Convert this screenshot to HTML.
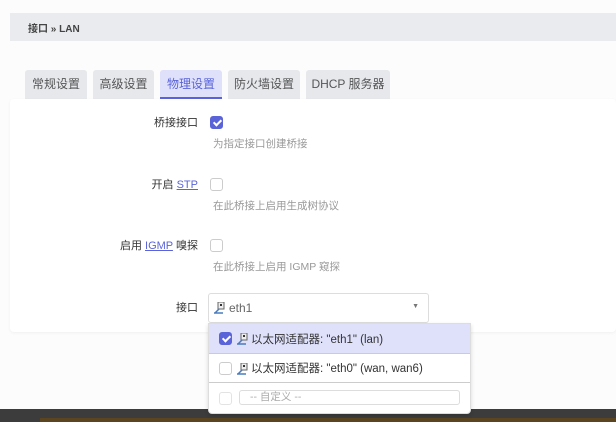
<!DOCTYPE html>
<html><head><meta charset="utf-8"><style>
*{box-sizing:border-box;margin:0;padding:0}
body{width:616px;height:422px;overflow:hidden;background:#fcfcfc;font-family:"Liberation Sans","Noto Sans CJK SC",sans-serif;font-size:11px;color:#333;position:relative}
.bc{position:absolute;left:10px;top:13px;width:606px;height:28px;background:#e9ebee;font-size:10px;font-weight:bold;color:#444;padding:7px 0 0 18px}
.tab{position:absolute;top:70px;height:29px;background:#e6e8ec;border-radius:3px 3px 0 0;font-size:12px;color:#555;text-align:center;line-height:28px}
.tab.a{background:#dfe1fb;color:#5a64d8;border-bottom:2px solid #5b63d9}
.card{position:absolute;left:10px;top:99px;width:606px;height:233px;background:#fff;border-radius:4px;box-shadow:0 1px 3px rgba(0,0,0,.05)}
.lbl{position:absolute;right:418px;font-size:11px;color:#333;text-align:right}
.lbl a{color:#5a64d8;text-decoration:underline}
.desc{position:absolute;left:213px;font-size:10.5px;color:#999}
.cb{position:absolute;width:13px;height:13px;border:1px solid #ccc;border-radius:3px;background:#fff}
.cb.on{background:#5b63d9;border-color:#5b63d9}
.cb.on:after{content:"";position:absolute;left:3.5px;top:1px;width:3px;height:6px;border:solid #fff;border-width:0 2px 2px 0;transform:rotate(45deg)}
.sel{position:absolute;left:208px;top:293px;width:221px;height:30px;border:1px solid #ddd;border-radius:3px;background:#fff;font-size:12px;color:#666;padding:7px 0 0 20px}
.ic{position:absolute;width:11px;height:12px}
.dd{position:absolute;left:208px;top:323px;width:263px;height:91px;background:#fff;border:1px solid #ddd;border-radius:0 0 4px 4px;box-shadow:0 2px 4px rgba(0,0,0,.15);z-index:3}
.row{position:absolute;left:0;width:261px;font-size:11.5px;color:#333}
.bot{position:absolute;left:0;top:409px;width:616px;height:13px;background:#3c3c3c}
.bot2{position:absolute;left:40px;top:418px;width:576px;height:4px;background:#5a4520}
</style></head><body>
<div class="bc">接口 » LAN</div>
<div class="tab" style="left:25px;width:62px">常规设置</div>
<div class="tab" style="left:93px;width:61px">高级设置</div>
<div class="tab a" style="left:160px;width:62px">物理设置</div>
<div class="tab" style="left:228px;width:72px">防火墙设置</div>
<div class="tab" style="left:306px;width:84px">DHCP 服务器</div>
<div class="card"></div>
<div class="lbl" style="top:114px">桥接接口</div>
<div class="cb on" style="left:210px;top:116px"></div>
<div class="desc" style="top:136px">为指定接口创建桥接</div>
<div class="lbl" style="top:176px">开启 <a>STP</a></div>
<div class="cb" style="left:210px;top:178px"></div>
<div class="desc" style="top:198px">在此桥接上启用生成树协议</div>
<div class="lbl" style="top:237px">启用 <a>IGMP</a> 嗅探</div>
<div class="cb" style="left:210px;top:239px"></div>
<div class="desc" style="top:259px">在此桥接上启用 IGMP 窥探</div>
<div class="lbl" style="top:299px">接口</div>
<div class="sel">
<svg class="ic" style="left:5px;top:8px" viewBox="0 0 11 12"><rect x="4" y="0" width="6" height="7" fill="#eee" stroke="#666" stroke-width="1"/><rect x="6" y="2" width="2" height="2" fill="#333"/><path d="M1 11 L5 7 M0 11 H9" stroke="#4a7bbd" stroke-width="1.5"/></svg>
eth1<span style="position:absolute;right:9px;top:9px;font-size:7px;color:#777">▼</span></div>
<div class="dd">
<div class="row" style="top:0;height:30px;background:#dfe1fb;border-bottom:1px solid #ccc">
<div class="cb on" style="left:10px;top:8px"></div>
<svg class="ic" style="left:28px;top:9px" viewBox="0 0 11 12"><rect x="4" y="0" width="6" height="7" fill="#eee" stroke="#666" stroke-width="1"/><rect x="6" y="2" width="2" height="2" fill="#333"/><path d="M1 11 L5 7 M0 11 H9" stroke="#4a7bbd" stroke-width="1.5"/></svg>
<span style="position:absolute;left:42px;top:7px">以太网适配器: "eth1" (lan)</span></div>
<div class="row" style="top:30px;height:29px;border-bottom:1px solid #ccc">
<div class="cb" style="left:10px;top:8px"></div>
<svg class="ic" style="left:28px;top:9px" viewBox="0 0 11 12"><rect x="4" y="0" width="6" height="7" fill="#eee" stroke="#666" stroke-width="1"/><rect x="6" y="2" width="2" height="2" fill="#333"/><path d="M1 11 L5 7 M0 11 H9" stroke="#4a7bbd" stroke-width="1.5"/></svg>
<span style="position:absolute;left:42px;top:6px">以太网适配器: "eth0" (wan, wan6)</span></div>
<div class="row" style="top:59px;height:30px">
<div class="cb" style="left:10px;top:9px;border-color:#e3e3e3"></div>
<div style="position:absolute;left:30px;top:7px;width:221px;height:15px;border:1px solid #ddd;border-radius:3px;font-size:10.5px;line-height:13px;color:#aaa;padding:0 0 0 10px">-- 自定义 --</div></div>
</div>
<div class="bot"></div><div class="bot2"></div>
</body></html>
